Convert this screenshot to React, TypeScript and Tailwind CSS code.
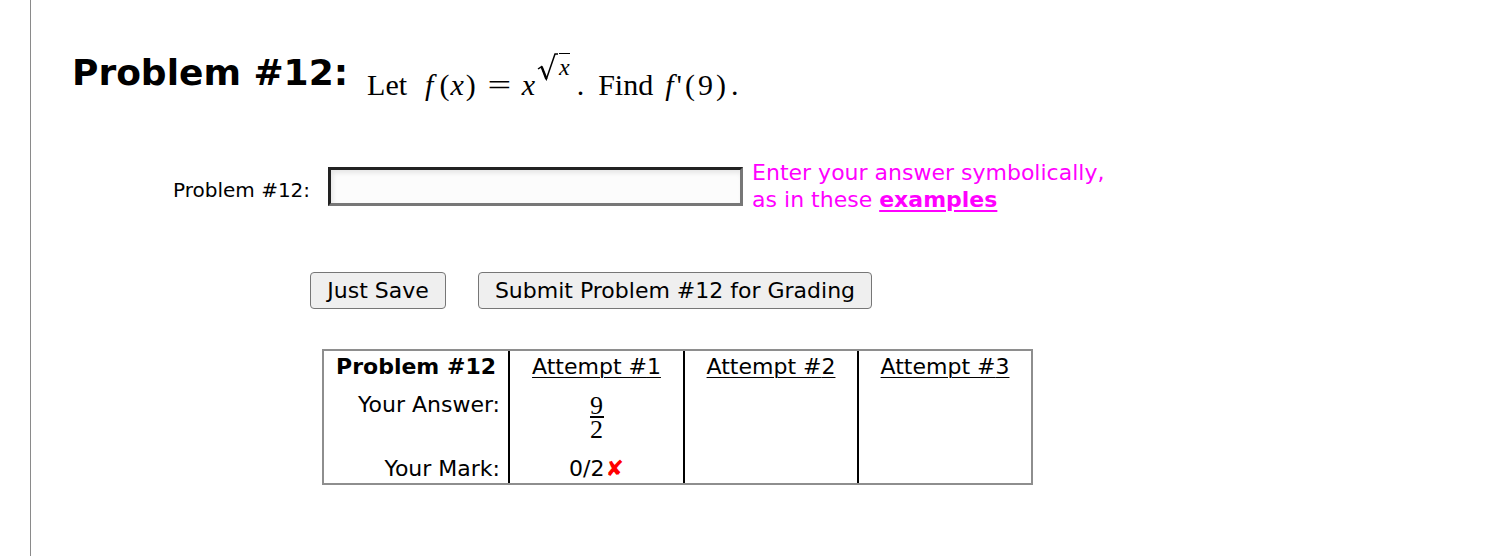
import React from "react";

const sans = "font-['DejaVu_Sans',Verdana,sans-serif]";
const serif = "font-['Liberation_Serif','Times_New_Roman',serif]";

function Radical() {
  return (
    <svg
      className="absolute left-0 top-[-2px]"
      width="21"
      height="29"
      viewBox="0 0 21 29"
      fill="none"
    >
      <path
        d="M1 17 L4.6 14.6 L9.4 27 L18 2 L21 2"
        stroke="black"
        strokeWidth="1.5"
        strokeLinejoin="miter"
      />
      <path d="M4.6 14.6 L9.4 27" stroke="black" strokeWidth="2.4" />
    </svg>
  );
}

function Fraction() {
  return (
    <div className={`flex flex-col items-center ${serif} text-[26px] text-black`}>
      <span className="h-[19px] leading-[19px]">9</span>
      <div className="mt-[1px] h-[2px] w-[14px] bg-black" />
      <span className="mt-[2px] h-[19px] leading-[19px]">2</span>
    </div>
  );
}

function AttemptColumn({ n, answer, mark }: { n: number; answer?: React.ReactNode; mark?: React.ReactNode }) {
  return (
    <div className="flex w-[175px] flex-col border-l-2 border-black last:w-[174px] [&:nth-child(3)]:w-[174px]">
      <div className="h-[34px] pt-[3px] text-center leading-[26px]">
        <span className="underline decoration-1 underline-offset-[3px]">Attempt #{n}</span>
      </div>
      <div className="flex h-[67px] justify-center pt-[11px]">{answer}</div>
      <div className="h-[31px] pt-[4px] text-center leading-[26px]">{mark}</div>
    </div>
  );
}

export default function App() {
  return (
    <div className={`min-h-screen bg-white pl-[30px] text-black ${sans}`}>
      <div className="min-h-[556px] border-l border-[#8a8a8a]">
        {/* heading */}
        <div className="h-[160px] pl-[41px] pt-[51px]">
          <h2 className="whitespace-nowrap text-[36px] font-bold leading-[44px]">
            Problem #12:
            <span className={`ml-[19px] align-[-10px] text-[30px] font-normal leading-[30px] ${serif}`}>
              <span>Let</span>
              <i className="ml-[18px]">f</i>
              <span className="ml-[6px]">(</span>
              <i className="ml-[1px]">x</i>
              <span className="ml-[2px]">)</span>
              <span className="ml-[15px] inline-block scale-x-[1.4]">=</span>
              <i className="ml-[14px]">x</i>
              <span className="relative ml-[2px] pl-[22px] align-[20px] text-[24px]">
                <Radical />
                <i className="border-t-[1.5px] border-black">x</i>
              </span>
              <span className="ml-[7px]">.</span>
              <span className="ml-[14px]">Find</span>
              <i className="ml-[12px]">f</i>
              <span className="ml-[3px]">'</span>
              <span className="ml-[3px]">(</span>
              <span className="ml-[3px]">9</span>
              <span className="ml-[3px]">)</span>
              <span className="ml-[5px]">.</span>
            </span>
          </h2>
        </div>

        {/* answer row */}
        <div className="flex h-[52px] items-center pl-[142px]">
          <label className="mt-[8px] text-[20px] leading-[24px]">Problem #12:</label>
          <input
            type="text"
            className="ml-[18px] h-[39px] w-[415px] border-[3px] border-b-[#777] border-l-[#222] border-r-[#777] border-t-[#222] bg-[#fcfcfc] shadow-[inset_2px_3px_5px_rgba(0,0,0,0.09)] outline-none"
          />
          <div className="ml-[9px] text-[22px] leading-[27px] text-[#ff00ff]">
            <div>Enter your answer symbolically,</div>
            <div>
              as in these{" "}
              <a href="#" className="font-bold underline decoration-2 underline-offset-[3px]">
                examples
              </a>
            </div>
          </div>
        </div>

        {/* buttons */}
        <div className="mt-[60px] flex gap-[32px] pl-[279px]">
          <button className="h-[37px] w-[136px] rounded-[4px] border border-[#767676] bg-[#efefef] text-[22px] leading-[26px]">
            Just Save
          </button>
          <button className="h-[37px] w-[394px] rounded-[4px] border border-[#767676] bg-[#efefef] text-[22px] leading-[26px]">
            Submit Problem #12 for Grading
          </button>
        </div>

        {/* attempts table */}
        <div className="mt-[40px] pl-[291px]">
          <div className="flex w-[711px] border-2 border-[#8e8e8e] text-[22px]">
            <div className="flex w-[184px] flex-col text-right">
              <div className="h-[34px] pr-[12px] pt-[3px] font-bold leading-[26px]">Problem #12</div>
              <div className="h-[67px] pr-[8px] pt-[7px] leading-[26px]">Your Answer:</div>
              <div className="h-[31px] pr-[8px] pt-[4px] leading-[26px]">Your Mark:</div>
            </div>
            <AttemptColumn
              n={1}
              answer={<Fraction />}
              mark={
                <span>
                  0/2<span className="ml-[1px] font-bold text-[#ff0000]">✘</span>
                </span>
              }
            />
            <AttemptColumn n={2} />
            <AttemptColumn n={3} />
          </div>
        </div>
      </div>
    </div>
  );
}
